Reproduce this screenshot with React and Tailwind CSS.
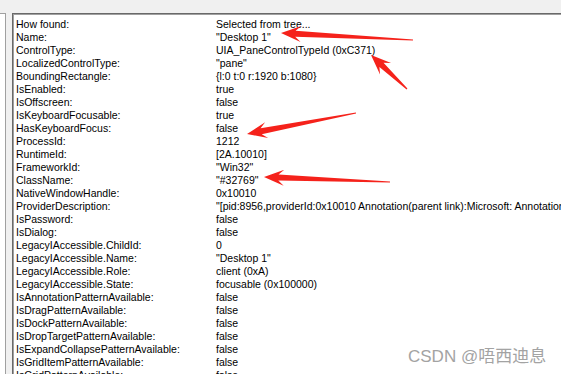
import React from 'react';

const rows = [
  ['How found:', 'Selected from tree...'],
  ['Name:', '"Desktop 1"'],
  ['ControlType:', 'UIA_PaneControlTypeId (0xC371)'],
  ['LocalizedControlType:', '"pane"'],
  ['BoundingRectangle:', '{l:0 t:0 r:1920 b:1080}'],
  ['IsEnabled:', 'true'],
  ['IsOffscreen:', 'false'],
  ['IsKeyboardFocusable:', 'true'],
  ['HasKeyboardFocus:', 'false'],
  ['ProcessId:', '1212'],
  ['RuntimeId:', '[2A.10010]'],
  ['FrameworkId:', '"Win32"'],
  ['ClassName:', '"#32769"'],
  ['NativeWindowHandle:', '0x10010'],
  ['ProviderDescription:', '"[pid:8956,providerId:0x10010 Annotation(parent link):Microsoft: Annotation Proxy (unmanaged:uiautomationcore.dll)"'],
  ['IsPassword:', 'false'],
  ['IsDialog:', 'false'],
  ['LegacyIAccessible.ChildId:', '0'],
  ['LegacyIAccessible.Name:', '"Desktop 1"'],
  ['LegacyIAccessible.Role:', 'client (0xA)'],
  ['LegacyIAccessible.State:', 'focusable (0x100000)'],
  ['IsAnnotationPatternAvailable:', 'false'],
  ['IsDragPatternAvailable:', 'false'],
  ['IsDockPatternAvailable:', 'false'],
  ['IsDropTargetPatternAvailable:', 'false'],
  ['IsExpandCollapsePatternAvailable:', 'false'],
  ['IsGridItemPatternAvailable:', 'false'],
  ['IsGridPatternAvailable:', 'false'],
];

// tapered red arrow, like a screenshot-tool annotation
const arrowPoints = (tail, tip, headLen, headW, neckW) => {
  const dx = tip[0] - tail[0];
  const dy = tip[1] - tail[1];
  const len = Math.hypot(dx, dy);
  const ux = dx / len;
  const uy = dy / len;
  const nx = -uy;
  const ny = ux;
  const base = [tip[0] - ux * headLen, tip[1] - uy * headLen];
  const neck = [tip[0] - ux * headLen * 0.72, tip[1] - uy * headLen * 0.72];
  const pts = [
    tip,
    [base[0] + nx * headW, base[1] + ny * headW],
    [neck[0] + nx * neckW, neck[1] + ny * neckW],
    [tail[0] + nx * 0.6, tail[1] + ny * 0.6],
    [tail[0] - nx * 0.6, tail[1] - ny * 0.6],
    [neck[0] - nx * neckW, neck[1] - ny * neckW],
    [base[0] - nx * headW, base[1] - ny * headW],
  ];
  return pts.map((p) => p.join(',')).join(' ');
};

const arrows = [
  { tail: [413, 40], tip: [281, 33] },
  { tail: [407, 89], tip: [371, 55] },
  { tail: [356, 113], tip: [247, 134] },
  { tail: [390, 182], tip: [264, 177] },
];

export default function App() {
  return (
    <div className="relative w-[561px] h-[374px] overflow-hidden bg-[#f0f0f0] pt-[13px] flex font-['Liberation_Sans',Arial,sans-serif] text-[10.5px] text-black">
      {/* tree pane edge */}
      <div className="w-[6px] shrink-0 h-full bg-white border-t border-r border-[#a0a0a0]" />

      {/* properties pane */}
      <div className="ml-[6px] flex-1 min-w-0 h-full border-t border-l border-[#696969]">
        <div className="h-full border-t border-l border-[#a0a0a0] bg-white pt-[3px] pl-[2px] overflow-hidden">
          {rows.map(([label, value]) => (
            <div key={label} className="flex h-[13px] leading-[13px] whitespace-nowrap">
              <div className="w-[200px] shrink-0">{label}</div>
              <div>{value}</div>
            </div>
          ))}
        </div>
      </div>

      <svg className="absolute inset-0 pointer-events-none" width="561" height="374">
        {arrows.map((a, i) => (
          <polygon key={i} points={arrowPoints(a.tail, a.tip, 20, 8, 3)} fill="#f5221b" />
        ))}
      </svg>

      <div className="absolute left-[408px] top-[346px] text-[17px] leading-[22px] text-[#a3a3a3] whitespace-nowrap font-['Liberation_Sans','Noto_Sans_CJK_SC',sans-serif]">
        CSDN @唔西迪息
      </div>
    </div>
  );
}
